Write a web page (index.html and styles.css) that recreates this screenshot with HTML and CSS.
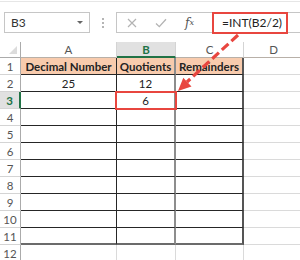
FILE: index.html
```html
<!DOCTYPE html>
<html>
<head>
<meta charset="utf-8">
<link rel="stylesheet" href="styles.css">
</head>
<body>
<div class="app">
  <div class="toolbar">
    <div class="namebox"><span>B3</span><span class="dd"></span></div>
    <div class="dots"><i></i><i></i><i></i></div>
    <div class="fbar">
      <span class="slot"><svg width="10" height="10" viewBox="0 0 10 10"><path d="M1 1L9 9M9 1L1 9" stroke="#b3b3b3" stroke-width="1.2" fill="none"/></svg></span>
      <span class="slot"><svg width="12" height="10" viewBox="0 0 12 10"><path d="M1 5.5L4.3 8.6L11 1.2" stroke="#b3b3b3" stroke-width="1.3" fill="none"/></svg></span>
      <span class="slot fx"><i>f</i><sub>x</sub></span>
      <span class="formula">=INT(B2/2)</span>
    </div>
  </div>
  <div class="sheet">
    <div class="cn"></div><div class="ch">A</div><div class="ch on">B</div><div class="ch">C</div><div class="ch">D</div>
    <div class="rh">1</div><div class="t h">Decimal Number</div><div class="t h bc">Quotients</div><div class="t h cc">Remainders</div><div class="g"></div>
    <div class="rh">2</div><div class="t">25</div><div class="t bc">12</div><div class="t cc"></div><div class="g"></div>
    <div class="rh on">3</div><div class="t">&nbsp;</div><div class="t bc">6</div><div class="t cc"></div><div class="g"></div>
    <div class="rh">4</div><div class="t"></div><div class="t bc"></div><div class="t cc"></div><div class="g"></div>
    <div class="rh">5</div><div class="t"></div><div class="t bc"></div><div class="t cc"></div><div class="g"></div>
    <div class="rh">6</div><div class="t"></div><div class="t bc"></div><div class="t cc"></div><div class="g"></div>
    <div class="rh">7</div><div class="t"></div><div class="t bc"></div><div class="t cc"></div><div class="g"></div>
    <div class="rh">8</div><div class="t"></div><div class="t bc"></div><div class="t cc"></div><div class="g"></div>
    <div class="rh">9</div><div class="t"></div><div class="t bc"></div><div class="t cc"></div><div class="g"></div>
    <div class="rh">10</div><div class="t"></div><div class="t bc"></div><div class="t cc"></div><div class="g"></div>
    <div class="rh">11</div><div class="t last"></div><div class="t bc last"></div><div class="t cc last"></div><div class="g"></div>
    <div class="rh">12</div><div class="g"></div><div class="g"></div><div class="g"></div><div class="g"></div>
  </div>
  <div class="hl hl-formula"></div>
  <div class="hl hl-cell"></div>
  <svg class="arrow" width="300" height="260" viewBox="0 0 300 260">
    <line x1="238" y1="35" x2="187" y2="82" stroke="#e8463f" stroke-width="3.2" stroke-dasharray="9 4"/>
    <polygon points="178,91 191.5,86.5 183.3,77.7" fill="#e8463f"/>
  </svg>
</div>
</body>
</html>
```
FILE: styles.css
```css
* { box-sizing: border-box; }
body {
  margin: 0;
  background: #fff;
  font-family: Lato, "Liberation Sans", sans-serif;
  color: #222;
}
.app {
  position: relative;
  width: 300px;
  height: 260px;
  overflow: hidden;
}
.toolbar {
  margin-top: 1px;
  border-top: 1px solid #e6e6e6;
  height: 41px;
  padding-top: 10px;
  display: flex;
  align-items: flex-start;
}
.namebox {
  margin-left: 4px;
  width: 86px;
  height: 21px;
  border: 1px solid #c6c6c6;
  display: flex;
  align-items: center;
  justify-content: space-between;
  padding: 0 6px 0 6px;
  font-size: 12px;
  color: #333;
}
.dd {
  width: 0;
  height: 0;
  border-left: 3px solid transparent;
  border-right: 3px solid transparent;
  border-top: 3px solid #666;
}
.dots {
  width: 26px;
  height: 21px;
  display: flex;
  flex-direction: column;
  align-items: center;
  justify-content: center;
  gap: 2px;
}
.dots i {
  width: 2px;
  height: 2px;
  background: #b5b5b5;
}
.fbar {
  flex: 1;
  height: 21px;
  border: 1px solid #c6c6c6;
  border-right: 0;
  display: flex;
  align-items: center;
}
.slot {
  width: 29px;
  height: 100%;
  display: flex;
  align-items: center;
  justify-content: center;
}
.fx {
  font-family: "DejaVu Serif", serif;
  font-size: 12px;
  color: #555;
}
.fx sub {
  font-size: 8px;
  font-style: italic;
  vertical-align: -2px;
}
.formula {
  margin-left: 18px;
  font-size: 12px;
  color: #222;
}
.sheet {
  display: grid;
  grid-template-columns: 21px 96px 59px 68px 60px;
  grid-template-rows: 16px repeat(12, 17px);
  font-size: 11.5px;
}
.sheet > div {
  display: flex;
  align-items: center;
  justify-content: center;
  white-space: nowrap;
  overflow: hidden;
  border-right: 1px solid #dadada;
  border-bottom: 1px solid #dadada;
}
.sheet > .cn {
  position: relative;
  border-right-color: #ababab;
  border-bottom-color: #ababab;
}
.cn::after {
  content: "";
  position: absolute;
  right: 3px;
  bottom: 3px;
  width: 8px;
  height: 8px;
  background: #dcdcdc;
  clip-path: polygon(100% 0, 100% 100%, 0 100%);
}
.sheet > .ch {
  color: #555;
  font-size: 11.5px;
  border-right-color: #d4d4d4;
  border-bottom-color: #b8b0a8;
}
.sheet > .ch.on {
  background: #e1e1e1;
  color: #217346;
  font-weight: 700;
  border-bottom: 2px solid #217346;
}
.sheet > .rh {
  color: #555;
  font-size: 11.5px;
  border-right-color: #ababab;
  border-bottom-color: #d4d4d4;
}
.sheet > .rh.on {
  background: #e1e1e1;
  color: #217346;
  font-weight: 700;
  border-right: 2px solid #217346;
}
.sheet > .t {
  border-right-color: #262626;
  border-bottom-color: #262626;
}
.sheet > .t.h {
  background: #f8cbad;
  font-weight: 700;
}
.sheet > .t.bc {
  border-right: 2px solid #8d8d8d;
}
.sheet > .t.cc {
  border-right: 2px solid #555;
}
.sheet > .t.last {
  border-bottom: 2px solid #6b6b6b;
}
.hl {
  position: absolute;
  border: 2px solid #e8463f;
}
.hl-formula {
  left: 212px;
  top: 12px;
  width: 76px;
  height: 22px;
}
.hl-cell {
  left: 115px;
  top: 91px;
  width: 62px;
  height: 19px;
}
.arrow {
  position: absolute;
  left: 0;
  top: 0;
}
```
